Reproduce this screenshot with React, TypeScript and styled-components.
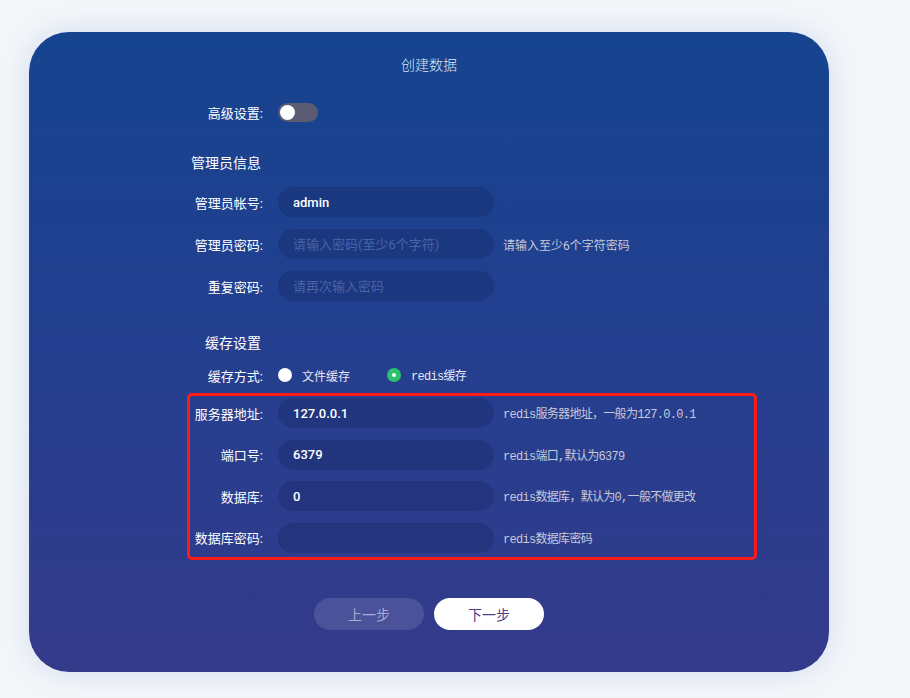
import React, { useState } from 'react';
import styled, { createGlobalStyle } from 'styled-components';

const GlobalStyle = createGlobalStyle`
  html, body {
    margin: 0;
    padding: 0;
    background: #f4f6f9;
    font-family: Roboto, "Noto Sans CJK SC", sans-serif;
  }
  * { box-sizing: border-box; }
`;

const Page = styled.div`
  width: 910px;
  height: 698px;
  padding: 32px 0 0 29px;
`;

const Card = styled.div`
  width: 800px;
  height: 640px;
  border-radius: 40px;
  background: linear-gradient(180deg, #16448f 0%, #243f8f 50%, #353a8b 100%);
  box-shadow: 0 0 30px rgba(120, 150, 220, 0.28);
  padding: 23px 0 0 161px;
  display: flex;
  flex-direction: column;
`;

const Title = styled.div`
  width: 478px;
  text-align: center;
  font-size: 14px;
  line-height: 20px;
  color: #dfe6f3;
  font-weight: 300;
`;

const Row = styled.div<{ $mt?: number }>`
  display: flex;
  align-items: center;
  margin-top: ${({ $mt }) => $mt ?? 12}px;
  min-height: 20px;
`;

const Label = styled.div`
  width: 73px;
  text-align: right;
  font-size: 13px;
  color: #ffffff;
  margin-right: 15px;
  white-space: nowrap;
`;

const Heading = styled.div<{ $mt: number }>`
  width: 71px;
  text-align: right;
  font-size: 14px;
  line-height: 20px;
  color: #ffffff;
  margin-top: ${({ $mt }) => $mt}px;
  white-space: nowrap;
`;

const Switch = styled.button<{ $on: boolean }>`
  width: 40px;
  height: 19px;
  border: none;
  padding: 0;
  border-radius: 10px;
  background: ${({ $on }) => ($on ? '#2fc26c' : '#5b5b73')};
  position: relative;
  cursor: pointer;

  &::after {
    content: '';
    position: absolute;
    top: 2px;
    left: ${({ $on }) => ($on ? '23px' : '2px')};
    width: 15px;
    height: 15px;
    border-radius: 50%;
    background: #ffffff;
  }
`;

const Input = styled.input`
  width: 216px;
  height: 30px;
  border: none;
  outline: none;
  border-radius: 15px;
  background: rgba(10, 22, 70, 0.2);
  padding: 0 15px;
  font-family: Roboto, "Noto Sans CJK SC", sans-serif;
  font-size: 13px;
  font-weight: 500;
  color: #ffffff;

  &::placeholder {
    color: #4a63a6;
    font-weight: 400;
  }
`;

const Hint = styled.span<{ $mono?: boolean }>`
  margin-left: 9px;
  font-size: 12px;
  color: #c6c9d8;
  white-space: nowrap;
  font-family: ${({ $mono }) =>
    $mono ? '"Liberation Mono", "Noto Sans CJK SC", monospace' : 'Roboto, "Noto Sans CJK SC", sans-serif'};
  letter-spacing: ${({ $mono }) => ($mono ? '-0.7px' : '0')};
`;

const RadioGroup = styled.div`
  display: flex;
  align-items: center;
  gap: 37px;
`;

const RadioItem = styled.label`
  display: flex;
  align-items: center;
  gap: 10px;
  cursor: pointer;
`;

const RadioDot = styled.span<{ $checked: boolean }>`
  width: 14px;
  height: 14px;
  border-radius: 50%;
  background: ${({ $checked }) => ($checked ? '#2fc26c' : '#ffffff')};
  display: flex;
  align-items: center;
  justify-content: center;

  &::after {
    content: '';
    width: 4px;
    height: 4px;
    border-radius: 50%;
    background: #ffffff;
    display: ${({ $checked }) => ($checked ? 'block' : 'none')};
  }
`;

const RadioText = styled.span<{ $mono?: boolean }>`
  font-size: 12px;
  color: #e4e7f2;
  font-family: ${({ $mono }) =>
    $mono ? '"Liberation Mono", "Noto Sans CJK SC", monospace' : 'Roboto, "Noto Sans CJK SC", sans-serif'};
  letter-spacing: ${({ $mono }) => ($mono ? '-0.7px' : '0')};
`;

const RedisBox = styled.div`
  width: 570px;
  margin: 8px 0 0 -3px;
  border: 3px solid #ff1a1a;
  border-radius: 5px;
  padding: 2px 0 4px;
  display: flex;
  flex-direction: column;
  gap: 11.5px;

  & > ${Row} {
    margin-top: 0;
  }
`;

const Actions = styled.div`
  width: 478px;
  margin-top: 38px;
  display: flex;
  justify-content: center;
  gap: 10px;
`;

const StepButton = styled.button<{ $primary?: boolean }>`
  width: 110px;
  height: 32px;
  border: none;
  border-radius: 16px;
  font-family: Roboto, "Noto Sans CJK SC", sans-serif;
  font-size: 14px;
  cursor: pointer;
  background: ${({ $primary }) => ($primary ? '#ffffff' : 'rgba(255, 255, 255, 0.12)')};
  color: ${({ $primary }) => ($primary ? '#4b3f8c' : '#a7abd2')};
`;

const redisFields = [
  { label: '服务器地址:', value: '127.0.0.1', hint: 'redis服务器地址，一般为127.0.0.1' },
  { label: '端口号:', value: '6379', hint: 'redis端口,默认为6379' },
  { label: '数据库:', value: '0', hint: 'redis数据库，默认为0,一般不做更改' },
  { label: '数据库密码:', value: '', hint: 'redis数据库密码' },
];

export default function App() {
  const [advanced, setAdvanced] = useState(false);
  const [cache, setCache] = useState<'file' | 'redis'>('redis');

  return (
    <>
      <GlobalStyle />
      <Page>
        <Card>
          <Title>创建数据</Title>

          <Row $mt={27}>
            <Label>高级设置:</Label>
            <Switch $on={advanced} onClick={() => setAdvanced(!advanced)} />
          </Row>

          <Heading $mt={31}>管理员信息</Heading>
          <Row $mt={14}>
            <Label>管理员帐号:</Label>
            <Input defaultValue="admin" />
          </Row>
          <Row>
            <Label>管理员密码:</Label>
            <Input type="password" placeholder="请输入密码(至少6个字符)" />
            <Hint>请输入至少6个字符密码</Hint>
          </Row>
          <Row>
            <Label>重复密码:</Label>
            <Input type="password" placeholder="请再次输入密码" />
          </Row>

          <Heading $mt={32}>缓存设置</Heading>
          <Row>
            <Label>缓存方式:</Label>
            <RadioGroup>
              <RadioItem onClick={() => setCache('file')}>
                <RadioDot $checked={cache === 'file'} />
                <RadioText>文件缓存</RadioText>
              </RadioItem>
              <RadioItem onClick={() => setCache('redis')}>
                <RadioDot $checked={cache === 'redis'} />
                <RadioText $mono>redis缓存</RadioText>
              </RadioItem>
            </RadioGroup>
          </Row>

          <RedisBox>
            {redisFields.map((f) => (
              <Row key={f.label}>
                <Label>{f.label}</Label>
                <Input defaultValue={f.value} />
                <Hint $mono>{f.hint}</Hint>
              </Row>
            ))}
          </RedisBox>

          <Actions>
            <StepButton>上一步</StepButton>
            <StepButton $primary>下一步</StepButton>
          </Actions>
        </Card>
      </Page>
    </>
  );
}
